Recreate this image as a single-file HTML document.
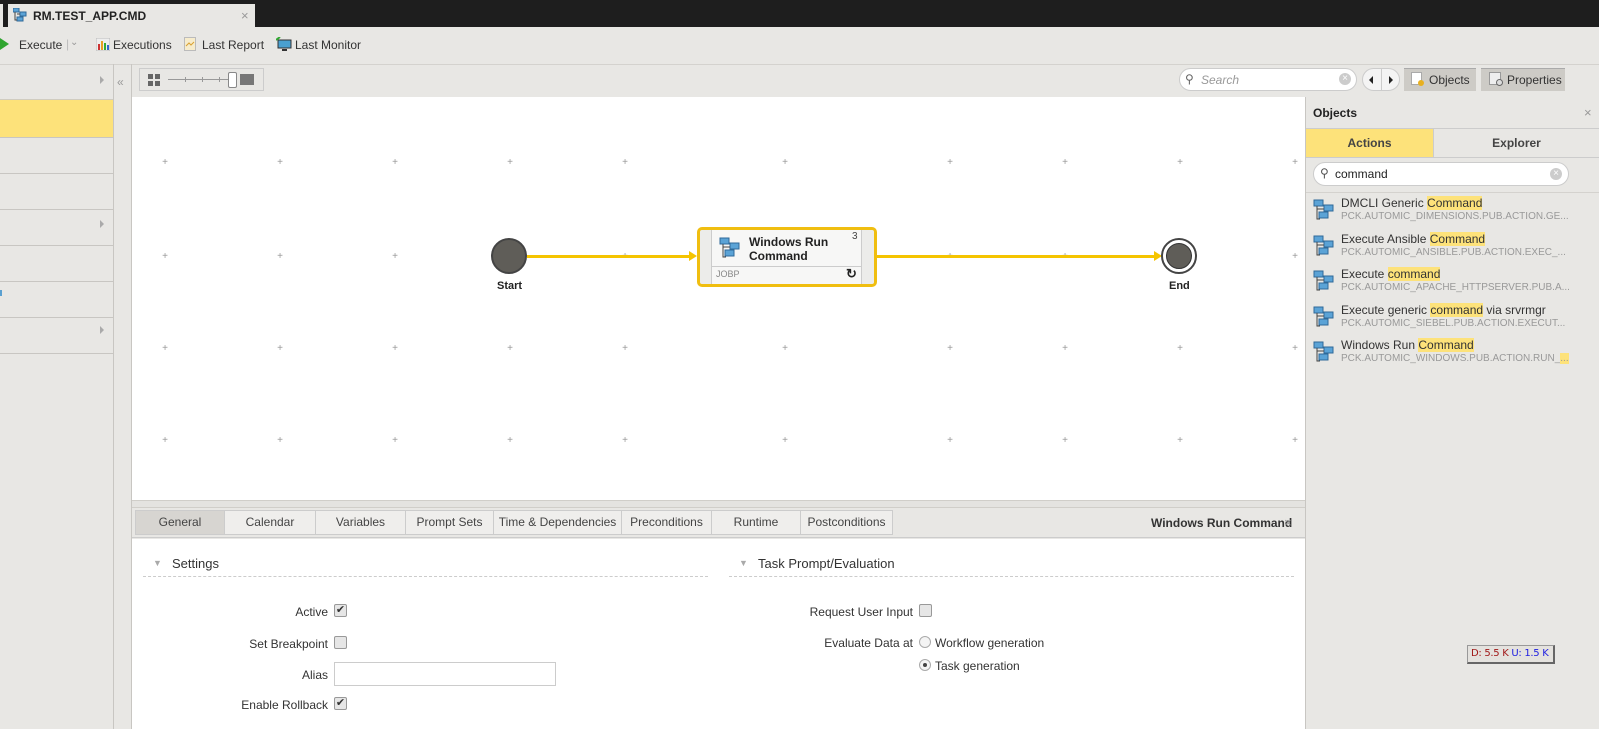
<!DOCTYPE html>
<html><head><meta charset="utf-8"><style>
*{box-sizing:border-box;margin:0;padding:0}
body{width:1599px;height:729px;overflow:hidden;background:#e8e7e4;font-family:"Liberation Sans",sans-serif;font-size:12px;color:#333;position:relative}
.a{position:absolute}
.plus{position:absolute;color:#999;font-size:10px;line-height:10px;width:10px;text-align:center}
.hl{background:#fde27a}
.item{position:absolute;left:1305px;width:294px;height:36px}
.item .t{position:absolute;left:36px;top:5px;font-size:12px;color:#333}
.item .s{position:absolute;left:36px;top:20px;font-size:10px;color:#999;white-space:nowrap}
.tab{position:absolute;top:511px;height:23px;border-right:1px solid #ccc;text-align:center;line-height:23px;font-size:12px;color:#444;background:#efeeec}
.cb{position:absolute;width:13px;height:13px;border:1px solid #999;border-radius:2px;background:#e6e6e6;font-size:11px;line-height:11px;text-align:center;color:#333}
.lbl{position:absolute;font-size:12px;color:#333;text-align:right}
.lrow{position:absolute;left:0;width:113px;border-bottom:1px solid #c8c6c2}
</style></head><body>
<div class="a" style="left:0;top:0;width:1599px;height:27px;background:#1e1e1e"></div>
<div class="a" style="left:0;top:4px;width:3px;height:23px;background:#e8e7e4"></div>
<div class="a" style="left:8px;top:4px;width:247px;height:23px;background:#e8e7e4"></div>
<svg class="a" style="left:13px;top:8px" width="14" height="14"><rect x="0" y="0" width="6" height="4" fill="#5ba3d6" stroke="#2f6a99"/><rect x="7" y="4" width="6" height="4" fill="#5ba3d6" stroke="#2f6a99"/><rect x="4" y="9" width="6" height="4" fill="#5ba3d6" stroke="#2f6a99"/><path d="M2 4V12H4M4 6H7" stroke="#444" fill="none"/></svg>
<div class="a" style="left:33px;top:9px;font-size:12px;font-weight:bold;color:#222">RM.TEST_APP.CMD</div>
<div class="a" style="left:241px;top:8px;font-size:13px;color:#999">×</div>
<div class="a" style="left:0;top:38px;width:0;height:0;border-left:9px solid #2fa52f;border-top:6px solid transparent;border-bottom:6px solid transparent"></div>
<div class="a" style="left:19px;top:38px;font-size:12px">Execute</div>
<div class="a" style="left:66px;top:37px;color:#bbb">|</div><div class="a" style="left:70px;top:37px;color:#999;font-size:10px">⌄</div>
<svg class="a" style="left:96px;top:38px" width="14" height="13"><rect width="14" height="13" fill="#eee" stroke="#bbb"/><rect x="2" y="6" width="2" height="6" fill="#c33"/><rect x="5" y="3" width="2" height="9" fill="#e8a020"/><rect x="8" y="5" width="2" height="7" fill="#3a3"/><rect x="11" y="7" width="2" height="5" fill="#36c"/></svg>
<div class="a" style="left:113px;top:38px">Executions</div>
<svg class="a" style="left:184px;top:37px" width="12" height="14"><rect x="0.5" y="0.5" width="11" height="13" fill="#f7eccb" stroke="#bbb"/><path d="M2 9L5 6L7 8L10 5" stroke="#d9a030" fill="none"/></svg>
<div class="a" style="left:202px;top:38px">Last Report</div>
<svg class="a" style="left:276px;top:37px" width="16" height="15"><rect x="2" y="3" width="13" height="8" fill="#4aa0d0" stroke="#333"/><rect x="6" y="12" width="5" height="2" fill="#333"/><path d="M0 3L4 0" stroke="#3a3" stroke-width="2"/></svg>
<div class="a" style="left:295px;top:38px">Last Monitor</div>
<div class="a" style="left:0;top:64px;width:1599px;height:1px;background:#d4d2ce"></div>
<div class="a" style="left:113px;top:64px;width:1px;height:665px;background:#c8c6c2"></div>
<div class="a" style="left:100px;top:76px;width:0;height:0;border-left:4px solid #aaa;border-top:4px solid transparent;border-bottom:4px solid transparent"></div>
<div class="lrow" style="top:99px;height:39px;background:#fde27a;border-top:1px solid #d0ccc0"></div>
<div class="lrow" style="top:138px;height:36px"></div>
<div class="lrow" style="top:174px;height:36px"></div>
<div class="lrow" style="top:210px;height:36px"></div>
<div class="lrow" style="top:246px;height:36px"></div>
<div class="lrow" style="top:282px;height:36px"></div>
<div class="lrow" style="top:318px;height:36px"></div>
<div class="a" style="left:100px;top:220px;border-left:4px solid #aaa;border-top:4px solid transparent;border-bottom:4px solid transparent"></div>
<div class="a" style="left:100px;top:326px;border-left:4px solid #aaa;border-top:4px solid transparent;border-bottom:4px solid transparent"></div>
<div class="a" style="left:0;top:290px;width:2px;height:6px;background:#5aa0d0"></div>
<div class="a" style="left:117px;top:75px;color:#999;font-size:12px">«</div>
<div class="a" style="left:131px;top:64px;width:1px;height:665px;background:#c8c6c2"></div>
<div class="a" style="left:139px;top:68px;width:125px;height:23px;border:1px solid #ccc;background:#e8e7e4"></div>
<svg class="a" style="left:148px;top:74px" width="12" height="12"><rect width="5" height="5" fill="#666"/><rect x="7" width="5" height="5" fill="#666"/><rect y="7" width="5" height="5" fill="#666"/><rect x="7" y="7" width="5" height="5" fill="#666"/></svg>
<div class="a" style="left:168px;top:79px;width:64px;height:1px;background:#999"></div>
<div class="a" style="left:185px;top:77px;width:1px;height:5px;background:#999"></div><div class="a" style="left:202px;top:77px;width:1px;height:5px;background:#999"></div><div class="a" style="left:219px;top:77px;width:1px;height:5px;background:#999"></div>
<div class="a" style="left:228px;top:72px;width:9px;height:16px;background:#fff;border:1px solid #888;border-radius:2px"></div>
<div class="a" style="left:240px;top:74px;width:14px;height:11px;background:#777"></div>
<div class="a" style="left:1179px;top:68px;width:178px;height:23px;border:1px solid #ccc;border-radius:12px;background:#fff"></div>
<div class="a" style="left:1185px;top:72px;font-size:12px;color:#666">⚲</div>
<div class="a" style="left:1201px;top:73px;font-size:12px;font-style:italic;color:#999">Search</div>
<div class="a" style="left:1339px;top:73px;width:12px;height:12px;border-radius:6px;background:#ccc;color:#fff;font-size:10px;line-height:12px;text-align:center">×</div>
<div class="a" style="left:1362px;top:68px;width:38px;height:23px;border:1px solid #ccc;border-radius:12px;background:#f4f4f4"></div>
<div class="a" style="left:1381px;top:69px;width:1px;height:21px;background:#ccc"></div>
<div class="a" style="left:1369px;top:76px;border-right:4px solid #222;border-top:4px solid transparent;border-bottom:4px solid transparent"></div>
<div class="a" style="left:1389px;top:76px;border-left:4px solid #222;border-top:4px solid transparent;border-bottom:4px solid transparent"></div>
<div class="a" style="left:1404px;top:68px;width:72px;height:23px;background:#cdcbc6;border-top:1px solid #aaa"></div>
<div class="a" style="left:1411px;top:72px;width:11px;height:13px;background:#fff;border:1px solid #aaa"></div>
<div class="a" style="left:1418px;top:80px;width:6px;height:6px;border-radius:3px;background:#e8b020"></div>
<div class="a" style="left:1429px;top:73px;font-size:12px">Objects</div>
<div class="a" style="left:1481px;top:68px;width:84px;height:23px;background:#cdcbc6;border-top:1px solid #aaa"></div>
<div class="a" style="left:1489px;top:72px;width:12px;height:13px;border:1px solid #999;background:#eee"></div>
<div class="a" style="left:1496px;top:79px;width:7px;height:7px;border-radius:4px;border:1px solid #666;background:#ddd"></div>
<div class="a" style="left:1507px;top:73px;font-size:12px">Properties</div>
<div class="a" style="left:132px;top:97px;width:1173px;height:403px;background:#fff"></div>
<div id="grid"></div>
<div class="a" style="left:527px;top:255px;width:166px;height:3px;background:#f5c400"></div>
<div class="a" style="left:689px;top:251px;border-left:8px solid #f5c400;border-top:5px solid transparent;border-bottom:5px solid transparent"></div>
<div class="a" style="left:877px;top:255px;width:280px;height:3px;background:#f5c400"></div>
<div class="a" style="left:1154px;top:251px;border-left:8px solid #f5c400;border-top:5px solid transparent;border-bottom:5px solid transparent"></div>
<div class="a" style="left:491px;top:238px;width:36px;height:36px;border-radius:50%;background:#5f5d58;border:2px solid #444"></div>
<div class="a" style="left:497px;top:280px;font-size:11px;font-weight:bold;color:#222">Start</div>
<div class="a" style="left:1161px;top:238px;width:36px;height:36px;border-radius:50%;background:#fff;border:2px solid #444"></div>
<div class="a" style="left:1166px;top:243px;width:26px;height:26px;border-radius:50%;background:#5f5d58;border:1px solid #333"></div>
<div class="a" style="left:1169px;top:280px;font-size:11px;font-weight:bold;color:#222">End</div>
<div class="a" style="left:697px;top:227px;width:180px;height:60px;border:3px solid #f0be10;border-radius:5px;background:#ececea"></div>
<div class="a" style="left:711px;top:230px;width:151px;height:54px;background:#f7f7f6;border-left:1px solid #ccc;border-right:1px solid #ccc"></div>
<div class="a" style="left:711px;top:266px;width:151px;height:1px;background:#ccc"></div>
<svg class="a" style="left:719px;top:237px" width="22" height="22"><rect x="1" y="1" width="9" height="6" fill="#5ba3d6" stroke="#2f6a99"/><rect x="11" y="6" width="9" height="6" fill="#5ba3d6" stroke="#2f6a99"/><rect x="6" y="13" width="9" height="6" fill="#5ba3d6" stroke="#2f6a99"/><path d="M4 7V20H7M4 10H11" stroke="#444" fill="none"/></svg>
<div class="a" style="left:749px;top:235px;font-size:12px;font-weight:bold;color:#222;line-height:14px">Windows Run<br>Command</div>
<div class="a" style="left:852px;top:231px;font-size:10px;color:#444">3</div>
<div class="a" style="left:716px;top:269px;font-size:9px;color:#888">JOBP</div>
<div class="a" style="left:846px;top:266px;font-size:13px;font-weight:bold;color:#222">↻</div>
<div class="a" style="left:132px;top:500px;width:1173px;height:8px;background:#e4e3e0;border-top:1px solid #d0cec9;border-bottom:1px solid #d0cec9"></div>
<div class="a" style="left:132px;top:508px;width:1173px;height:30px;background:#e8e7e4;border-bottom:1px solid #ccc"></div>
<div class="a" style="left:135px;top:510px;width:758px;height:25px;border:1px solid #ccc;background:#efeeec"></div>
<div class="tab" style="left:136px;width:89px;background:#d7d5d1">General</div>
<div class="tab" style="left:225px;width:91px">Calendar</div>
<div class="tab" style="left:316px;width:90px">Variables</div>
<div class="tab" style="left:406px;width:88px">Prompt Sets</div>
<div class="tab" style="left:494px;width:128px">Time &amp; Dependencies</div>
<div class="tab" style="left:622px;width:90px">Preconditions</div>
<div class="tab" style="left:712px;width:89px">Runtime</div>
<div class="tab" style="left:801px;width:91px;border-right:none">Postconditions</div>
<div class="a" style="left:1151px;top:516px;font-size:12px;font-weight:bold;color:#333">Windows Run Command</div>
<div class="a" style="left:1284px;top:515px;font-size:13px;color:#999">×</div>
<div class="a" style="left:132px;top:539px;width:1173px;height:190px;background:#fff"></div>
<div class="a" style="left:153px;top:558px;color:#aaa;font-size:9px">▼</div>
<div class="a" style="left:172px;top:556px;font-size:13px;color:#333">Settings</div>
<div class="a" style="left:143px;top:576px;width:565px;border-top:1px dashed #ccc"></div>
<div class="a" style="left:739px;top:558px;color:#aaa;font-size:9px">▼</div>
<div class="a" style="left:758px;top:556px;font-size:13px;color:#333">Task Prompt/Evaluation</div>
<div class="a" style="left:729px;top:576px;width:565px;border-top:1px dashed #ccc"></div>
<div class="lbl" style="left:200px;width:128px;top:605px">Active</div><div class="cb" style="left:334px;top:604px">✔</div>
<div class="lbl" style="left:200px;width:128px;top:637px">Set Breakpoint</div><div class="cb" style="left:334px;top:636px"></div>
<div class="lbl" style="left:200px;width:128px;top:668px">Alias</div>
<div class="a" style="left:334px;top:662px;width:222px;height:24px;border:1px solid #ccc;background:#fff"></div>
<div class="lbl" style="left:200px;width:128px;top:698px">Enable Rollback</div><div class="cb" style="left:334px;top:697px">✔</div>
<div class="lbl" style="left:760px;width:153px;top:605px">Request User Input</div><div class="cb" style="left:919px;top:604px"></div>
<div class="lbl" style="left:760px;width:153px;top:636px">Evaluate Data at</div>
<div class="a" style="left:919px;top:636px;width:12px;height:12px;border:1px solid #aaa;border-radius:50%;background:#f4f4f4"></div>
<div class="a" style="left:935px;top:636px">Workflow generation</div>
<div class="a" style="left:919px;top:659px;width:12px;height:12px;border:1px solid #aaa;border-radius:50%;background:#f4f4f4"></div>
<div class="a" style="left:923px;top:663px;width:4px;height:4px;border-radius:50%;background:#444"></div>
<div class="a" style="left:935px;top:659px">Task generation</div>
<div class="a" style="left:1305px;top:97px;width:1px;height:632px;background:#c8c6c2"></div>
<div class="a" style="left:1313px;top:106px;font-size:12px;font-weight:bold;color:#222">Objects</div>
<div class="a" style="left:1584px;top:105px;font-size:13px;color:#999">×</div>
<div class="a" style="left:1306px;top:128px;width:293px;height:1px;background:#ccc"></div>
<div class="a" style="left:1306px;top:129px;width:127px;height:28px;background:#fde27a;text-align:center;line-height:28px;font-weight:bold;color:#444">Actions</div>
<div class="a" style="left:1433px;top:129px;width:166px;height:28px;border-left:1px solid #ccc;text-align:center;line-height:28px;font-weight:bold;color:#444">Explorer</div>
<div class="a" style="left:1306px;top:157px;width:293px;height:1px;background:#ccc"></div>
<div class="a" style="left:1313px;top:162px;width:256px;height:24px;border:1px solid #ccc;border-radius:12px;background:#fff"></div>
<div class="a" style="left:1320px;top:166px;font-size:12px;color:#555">⚲</div>
<div class="a" style="left:1335px;top:167px;font-size:12px;color:#222">command</div>
<div class="a" style="left:1550px;top:168px;width:12px;height:12px;border-radius:6px;background:#ccc;color:#fff;font-size:10px;line-height:12px;text-align:center">×</div>
<div class="a" style="left:1306px;top:192px;width:293px;height:1px;background:#d4d2ce"></div>
<div id="items"></div>
<div class="a" style="left:1467px;top:645px;width:88px;height:19px;background:#e4e2de;border:1px solid #999;border-right:2px solid #666;border-bottom:2px solid #666;font-family:'DejaVu Sans',sans-serif;font-size:10px;line-height:16px;padding-left:3px;white-space:nowrap;letter-spacing:-0.3px"><span style="color:#a01818">D: 5.5 K</span> <span style="color:#2020e0">U: 1.5 K</span></div>
<script>
var g='',xs=[165,280,395,510,625,785,950,1065,1180,1295],ys=[163,257,349,441];
ys.forEach(function(y){xs.forEach(function(x){if(y==257&&(x>480&&x<1200))return;g+='<div class="plus" style="left:'+(x-5)+'px;top:'+(y-5)+'px">+</div>';});});
g+='<div class="plus" style="left:620px;top:252px">+</div><div class="plus" style="left:945px;top:252px">+</div><div class="plus" style="left:1060px;top:252px">+</div>';
document.getElementById('grid').outerHTML=g;
var it=[['DMCLI Generic <span class=hl>Command</span>','PCK.AUTOMIC_DIMENSIONS.PUB.ACTION.GE...'],['Execute Ansible <span class=hl>Command</span>','PCK.AUTOMIC_ANSIBLE.PUB.ACTION.EXEC_...'],['Execute <span class=hl>command</span>','PCK.AUTOMIC_APACHE_HTTPSERVER.PUB.A...'],['Execute generic <span class=hl>command</span> via srvrmgr','PCK.AUTOMIC_SIEBEL.PUB.ACTION.EXECUT...'],['Windows Run <span class=hl>Command</span>','PCK.AUTOMIC_WINDOWS.PUB.ACTION.RUN_<span class=hl>...</span>']];
var h='';it.forEach(function(a,i){h+='<div class="item" style="top:'+(191+i*35.5)+'px"><svg style="position:absolute;left:8px;top:8px" width="22" height="22"><rect x="1" y="1" width="9" height="6" fill="#5ba3d6" stroke="#2f6a99"/><rect x="11" y="6" width="9" height="6" fill="#5ba3d6" stroke="#2f6a99"/><rect x="6" y="13" width="9" height="6" fill="#5ba3d6" stroke="#2f6a99"/><path d="M4 7V20H7M4 10H11" stroke="#444" fill="none"/></svg><div class="t">'+a[0]+'</div><div class="s">'+a[1]+'</div></div>';});
document.getElementById('items').outerHTML=h;
</script>
</body></html>
